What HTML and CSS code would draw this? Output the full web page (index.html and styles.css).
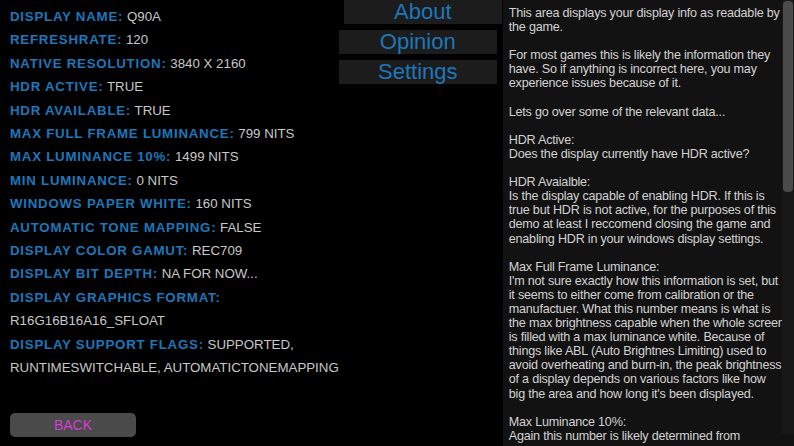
FILE: index.html
```html
<!DOCTYPE html>
<html lang="en">
<head>
  <meta charset="UTF-8">
  <meta name="viewport" content="width=device-width, initial-scale=1.0">
  <title>Display Info</title>
  <link rel="stylesheet" href="styles.css">
</head>
<body>
  <div class="screen">
    <div class="info">
      <ul class="info-list">
        <li><span class="label">DISPLAY NAME:</span> Q90A</li>
        <li><span class="label">REFRESHRATE:</span> 120</li>
        <li><span class="label">NATIVE RESOLUTION:</span> 3840 X 2160</li>
        <li><span class="label">HDR ACTIVE:</span> TRUE</li>
        <li><span class="label">HDR AVAILABLE:</span> TRUE</li>
        <li><span class="label">MAX FULL FRAME LUMINANCE:</span> 799 NITS</li>
        <li><span class="label">MAX LUMINANCE 10%:</span> 1499 NITS</li>
        <li><span class="label">MIN LUMINANCE:</span> 0 NITS</li>
        <li><span class="label">WINDOWS PAPER WHITE:</span> 160 NITS</li>
        <li><span class="label">AUTOMATIC TONE MAPPING:</span> FALSE</li>
        <li><span class="label">DISPLAY COLOR GAMUT:</span> REC709</li>
        <li><span class="label">DISPLAY BIT DEPTH:</span> NA FOR NOW...</li>
        <li><span class="label">DISPLAY GRAPHICS FORMAT:</span><br>R16G16B16A16_SFLOAT</li>
        <li><span class="label">DISPLAY SUPPORT FLAGS:</span> SUPPORTED,<br>RUNTIMESWITCHABLE, AUTOMATICTONEMAPPING</li>
      </ul>
      <button class="back-btn">BACK</button>
    </div>

    <div class="menu">
      <button class="menu-btn about">About</button>
      <button class="menu-btn">Opinion</button>
      <button class="menu-btn">Settings</button>
    </div>

    <div class="panel">
      <div class="viewport">
        <div class="panel-text">
          <p>This area displays your display info as readable by<br>the game.</p>
          <p>For most games this is likely the information they<br>have. So if anything is incorrect here, you may<br>experience issues because of it.</p>
          <p>Lets go over some of the relevant data...</p>
          <p>HDR Active:<br>Does the display currently have HDR active?</p>
          <p>HDR Avaialble:<br>Is the display capable of enabling HDR. If this is<br>true but HDR is not active, for the purposes of this<br>demo at least I reccomend closing the game and<br>enabling HDR in your windows display settings.</p>
          <p>Max Full Frame Luminance:<br>I'm not sure exactly how this information is set, but<br>it seems to either come from calibration or the<br>manufactuer. What this number means is what is<br>the max brightness capable when the whole screen<br>is filled with a max luminance white. Because of<br>things like ABL (Auto Brightnes Limiting) used to<br>avoid overheating and burn-in, the peak brightness<br>of a display depends on various factors like how<br>big the area and how long it's been displayed.</p>
          <p>Max Luminance 10%:<br>Again this number is likely determined from</p>
        </div>
      </div>
      <div class="scrollbar">
        <div class="thumb"></div>
      </div>
    </div>
  </div>
</body>
</html>
```

FILE: styles.css
```css
:root {
  --label-blue: #1d77ba;
  --value-gray: #c8c8c8;
  --panel-bg: #121212;
  --btn-bg: #1c1c1c;
}
* { box-sizing: border-box; }
html, body { margin: 0; padding: 0; background: #000; }
body {
  font-family: "Liberation Sans", Arial, sans-serif;
  width: 794px; height: 446px; overflow: hidden;
}
.screen { display: flex; height: 446px; }

/* left column */
.info {
  flex: 0 0 338px;
  display: flex; flex-direction: column;
  padding: 5px 0 9px 10px;
}
.info-list {
  list-style: none; margin: 0; padding: 0;
  white-space: nowrap;
  font-size: 13.3px; line-height: 23.4px;
  color: var(--value-gray);
}
.label {
  color: var(--label-blue); font-weight: bold; letter-spacing: 0.75px;
}
.back-btn {
  margin-top: auto;
  width: 126px; height: 24px;
  background: #4a4a4a; border: none; border-radius: 5px;
  color: #d43fd4; font-family: inherit; font-size: 14px;
  padding: 0; cursor: pointer;
}

/* middle menu */
.menu {
  flex: 0 0 164px;
  display: flex; flex-direction: column; gap: 6px;
}
.menu-btn {
  width: 158px; height: 24px; padding: 0;
  background: var(--btn-bg); border: none;
  color: var(--label-blue); font-family: inherit; font-size: 22px; line-height: 24px;
  cursor: pointer;
}
.menu-btn.about { margin-left: 5px; }

/* right info panel */
.panel {
  flex: 1; min-width: 0;
  display: flex;
  background: var(--panel-bg);
  color: #d2d2d2;
}
.viewport { flex: 1; min-width: 0; overflow: hidden; }
.panel-text {
  padding: 6px 0 0 6px;
  white-space: nowrap;
  font-size: 12.6px; line-height: 14.1px; letter-spacing: -0.22px;
}
.panel-text p { margin: 0 0 14.1px; }
.scrollbar {
  flex: 0 0 12px;
  height: 434px;
  background: #181818;
  padding: 1px 1px 0 1px;
}
.thumb {
  height: 191px;
  background: #4b4b4b; border-radius: 4px;
}
```
